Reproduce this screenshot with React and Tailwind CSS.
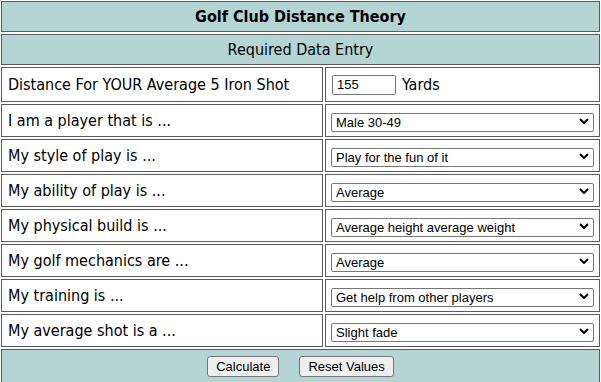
import React, { useState } from 'react';

const rows = [
  { label: 'I am a player that is ...', options: ['Male 18-29', 'Male 30-49', 'Male 50-64', 'Male 65+', 'Female 18-29', 'Female 30-49', 'Female 50+'], value: 'Male 30-49' },
  { label: 'My style of play is ...', options: ['Play for the fun of it', 'Competitive', 'Tournament'], value: 'Play for the fun of it' },
  { label: 'My ability of play is ...', options: ['Beginner', 'Average', 'Above average', 'Scratch'], value: 'Average' },
  { label: 'My physical build is ...', options: ['Average height average weight', 'Tall and thin', 'Short and heavy'], value: 'Average height average weight' },
  { label: 'My golf mechanics are ...', options: ['Poor', 'Average', 'Good'], value: 'Average' },
  { label: 'My training is ...', options: ['Get help from other players', 'Self taught', 'Lessons from a pro'], value: 'Get help from other players' },
  { label: 'My average shot is a ...', options: ['Straight', 'Slight fade', 'Slight draw', 'Slice', 'Hook'], value: 'Slight fade' },
];

const label = "font-['DejaVu_Sans_Condensed','DejaVu_Sans',sans-serif]";
const arial = "font-['Liberation_Sans',Arial,sans-serif]";

function Chevron() {
  return (
    <svg className="pointer-events-none absolute right-[5px] top-1/2 -translate-y-1/2" width="10" height="6" viewBox="0 0 10 6">
      <path d="M1 1 L5 5 L9 1" fill="none" stroke="#000" strokeWidth="2" />
    </svg>
  );
}

const Row = ({ row }) => {
  const [val, setVal] = useState(row.value);
  return (
    <div className="flex gap-[2px] h-[33px]">
      <div className={`w-[322px] border border-[#5a5a5a] flex items-center pl-[6px] text-[16px] text-black ${label}`}>
        {row.label}
      </div>
      <div className="w-[275px] border border-[#5a5a5a] flex items-center px-[5px]">
        <div className="relative w-full">
          <select
            value={val}
            onChange={(e) => setVal(e.target.value)}
            className={`appearance-none w-full h-[19px] border border-[#767676] rounded-[2px] bg-white pl-[4px] text-[13px] leading-[17px] text-black ${arial}`}
          >
            {row.options.map(o => <option key={o}>{o}</option>)}
          </select>
          <Chevron />
        </div>
      </div>
    </div>
  );
};

export default function App() {
  const [dist, setDist] = useState('155');

  return (
    <div className="w-[601px] h-[382px] overflow-hidden bg-white">
      <div className="flex flex-col gap-[2px] pt-[1px] pl-[1px] w-[600px]">
        <div className={`h-[31px] border border-[#5a5a5a] bg-[#b5d5d5] flex items-center justify-center text-[16px] font-bold text-black ${label}`}>
          Golf Club Distance Theory
        </div>
        <div className={`h-[31px] border border-[#5a5a5a] bg-[#b5d5d5] flex items-center justify-center text-[16px] text-black ${label}`}>
          Required Data Entry
        </div>

        <div className="flex gap-[2px] h-[35px]">
          <div className={`w-[322px] border border-[#5a5a5a] flex items-center pl-[6px] text-[16px] text-black ${label}`}>
            Distance For YOUR Average 5 Iron Shot
          </div>
          <div className="w-[275px] border border-[#5a5a5a] flex items-center pl-[6px] gap-[6px]">
            <input
              type="text"
              value={dist}
              onChange={(e) => setDist(e.target.value)}
              className={`w-[64px] h-[20px] border border-[#767676] rounded-[2px] px-[4px] text-[13px] text-black ${arial}`}
            />
            <span className={`text-[16px] text-black ${label}`}>Yards</span>
          </div>
        </div>

        {rows.map(r => <Row key={r.label} row={r} />)}

        <div className="h-[40px] border border-[#5a5a5a] bg-[#b5d5d5] flex justify-center gap-[20px] pt-[6px]">
          <button className={`h-[21px] px-[8px] bg-[#efefef] border border-[#767676] rounded-[3px] text-[13px] text-black ${arial}`}>
            Calculate
          </button>
          <button className={`h-[21px] px-[8px] bg-[#efefef] border border-[#767676] rounded-[3px] text-[13px] text-black ${arial}`}>
            Reset Values
          </button>
        </div>
      </div>
    </div>
  );
}
